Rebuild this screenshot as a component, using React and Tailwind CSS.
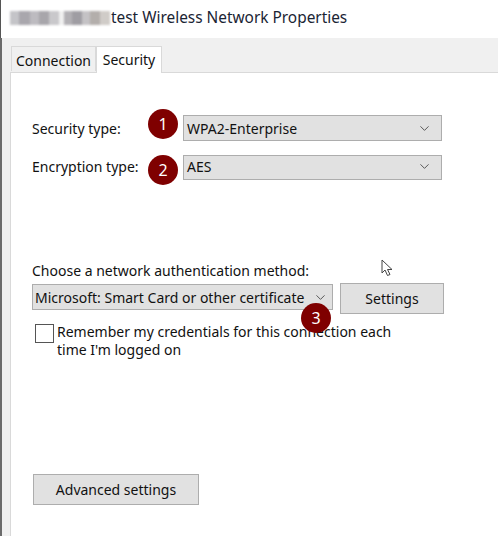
import { ChevronDown } from 'lucide-react';

const blurBlocks = [
  ['w-[9px]', 'bg-[#c4c4c8]'], ['w-[11px]', 'bg-[#a9a7ad]'], ['w-[9px]', 'bg-[#bdbbc0]'], ['w-[10px]', 'bg-[#a8a6ab]'],
  ['w-[10px]', 'bg-[#c9c8cb]'], ['w-[5px]', 'bg-[#f0f0f0]'], ['w-[8px]', 'bg-[#b3b1b5]'], ['w-[10px]', 'bg-[#9f9da3]'],
  ['w-[8px]', 'bg-[#c4c2c5]'], ['w-[10px]', 'bg-[#b3aeab]'], ['w-[10px]', 'bg-[#d0ccc8]'],
];

function Combo({ text, className, textClass }) {
  return (
    <div className={`flex items-center justify-between bg-[#e1e1e1] border border-[#adadad] ${className}`}>
      <span className={`text-[14px] text-[#111] whitespace-nowrap ${textClass}`}>{text}</span>
      <ChevronDown size={15} strokeWidth={1.4} className="text-[#444]" />
    </div>
  );
}

function Badge({ n, className }) {
  return (
    <div className={`absolute w-[30px] h-[30px] rounded-full bg-[#7f0000] text-white text-[16px] flex items-center justify-center ${className}`}>{n}</div>
  );
}

export default function App() {
  return (
    <div className="relative w-[498px] h-[536px] overflow-hidden bg-white text-[14px] text-[#111] font-['Noto_Sans','Open_Sans',sans-serif]">
      <div className="h-[38px] flex items-center pl-[9px] pb-[2px] text-[#1a2433] text-[15.4px] border-l border-[#555]">
        <div className="flex h-[14px] blur-[1px] mr-[1px]">
          {blurBlocks.map((b, i) => <div key={i} className={`${b[0]} ${b[1]}`} />)}
        </div>
        <span className="whitespace-nowrap">test Wireless Network Properties</span>
      </div>

      <div className="h-[498px] flex flex-col bg-[#f0f0f0] border-l-2 border-[#6b6b6b] pl-[8px]">
        <div className="h-[34px] flex items-end pl-[1px] relative z-10">
          <div className="w-[85px] h-[25px] bg-[#f0f0f0] border border-b-0 border-[#d9d9d9] flex items-center justify-center mb-[1px] pt-[2px]">Connection</div>
          <div className="w-[66px] h-[27px] bg-white border border-b-0 border-[#d9d9d9] flex items-center justify-center pb-[2px] -mb-[1px]">Security</div>
        </div>

        <div className="flex-1 bg-white border-t border-l border-[#d9d9d9] pl-[21px] flex flex-col">
          <div className="flex items-center mt-[42px] h-[26px]">
            <span className="w-[151px] pt-[1px]">Security type:</span>
            <Combo text="WPA2-Enterprise" className="w-[259px] h-[26px] pl-[3px] pr-[9px]" />
          </div>
          <div className="flex items-center mt-[13px] h-[26px]">
            <span className="w-[151px] pb-[1px]">Encryption type:</span>
            <Combo text="AES" className="w-[259px] h-[25px] pl-[3px] pr-[9px] pb-[1px]" />
          </div>

          <div className="mt-[81px] leading-[20px]">Choose a network authentication method:</div>
          <div className="flex items-start mt-[2px]">
            <Combo text="Microsoft: Smart Card or other certificate" className="w-[301px] h-[26px] mt-[1px] pl-[2px] pr-[4px]" />
            <button className="w-[104px] h-[31px] ml-[7px] bg-[#e1e1e1] border border-[#adadad] pb-[1px]">Settings</button>
          </div>
          <div className="flex items-start mt-[9px] pl-[3px]">
            <div className="w-[19px] h-[19px] border border-[#555] bg-white shrink-0 mt-[1px]" />
            <div className="ml-[3px] w-[350px] leading-[18px]">Remember my credentials for this connection each time I'm logged on</div>
          </div>

          <button className="w-[166px] h-[31px] mt-[115px] ml-[1px] bg-[#e1e1e1] border border-[#adadad]">Advanced settings</button>
        </div>
      </div>

      <Badge n="1" className="left-[148px] top-[109px]" />
      <Badge n="2" className="left-[148px] top-[155px]" />
      <Badge n="3" className="left-[301px] top-[303px]" />

      <svg className="absolute left-[381px] top-[259px]" width="13" height="18" viewBox="0 0 13 18">
        <path d="M1 1 L1 14 L4 11 L6.5 16.5 L9 15.5 L6.5 10.5 L11 10.5 Z" fill="#fff" stroke="#444" strokeWidth="1" />
      </svg>
    </div>
  );
}
